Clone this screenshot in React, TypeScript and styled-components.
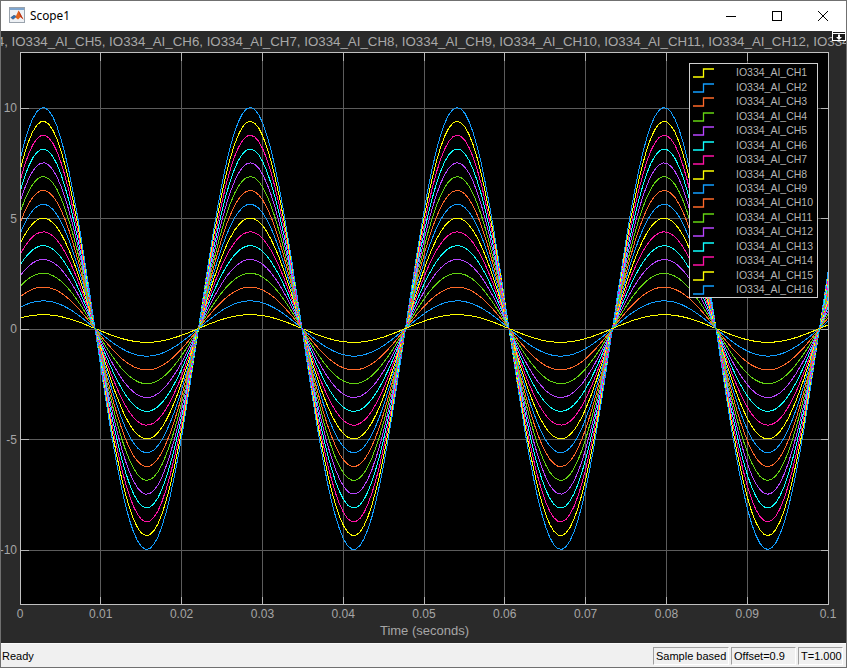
import React from 'react';
import styled, { createGlobalStyle } from 'styled-components';

const COLORS = ['#ffff00', '#129eff', '#ff6929', '#64d412', '#b845ff', '#0fffff', '#ff12a6'];

const channels = Array.from({ length: 16 }, (_, i) => ({
  name: `IO334_AI_CH${i + 1}`,
  color: COLORS[i % COLORS.length],
  amplitude: ((i + 1) * 10) / 16,
}));

const AXES = { left: 20.5, right: 828.5, top: 52.5, bottom: 604.5 };
const ZERO_Y = 328.5;
const UNIT_Y = 22.1;
const TENTH_X = (AXES.right - AXES.left) / 10;

const xTicks = ['0', '0.01', '0.02', '0.03', '0.04', '0.05', '0.06', '0.07', '0.08', '0.09', '0.1'];
const yTicks = [10, 5, 0, -5, -10];

const wavePoints = (amplitude: number) => {
  const points: string[] = [];
  for (let x = AXES.left; x <= AXES.right; x += 4.04) {
    const value = amplitude * Math.sin((2 * Math.PI * (95 - x)) / 207);
    points.push(`${x.toFixed(1)},${(ZERO_Y - value * UNIT_Y).toFixed(1)}`);
  }
  return points.join(' ');
};

const GlobalStyle = createGlobalStyle`
  html, body {
    margin: 0;
    padding: 0;
    background: #ffffff;
  }
`;

const Window = styled.div`
  box-sizing: border-box;
  display: flex;
  flex-direction: column;
  width: 847px;
  height: 668px;
  border: 1px solid #707070;
  overflow: hidden;
  font-family: 'Liberation Sans', Arial, sans-serif;
`;

const TitleBar = styled.div`
  display: flex;
  align-items: center;
  flex: 0 0 30px;
  background: #ffffff;
`;

const AppIcon = styled.svg`
  flex: none;
  width: 16px;
  height: 16px;
  margin: 0 0 2px 8px;
`;

const WindowTitle = styled.span`
  flex: 1;
  margin: 0 0 2px 5px;
  font-family: 'Noto Sans', sans-serif;
  font-size: 11.8px;
  color: #000000;
`;

const WindowButton = styled.div`
  display: flex;
  align-items: center;
  justify-content: center;
  width: 46px;
  height: 30px;
`;

const Figure = styled.div`
  position: relative;
  display: flex;
  flex-direction: column;
  flex: 1;
  background: #2a2a2a;
`;

const PlotTitle = styled.div`
  display: flex;
  justify-content: center;
  flex: 0 0 21px;
  line-height: 22px;
  overflow: hidden;
  white-space: nowrap;
  font-size: 13.3px;
  color: #a8a8a8;
`;

const UndockIcon = styled.svg`
  position: absolute;
  top: 0;
  right: 0;
  width: 14px;
  height: 11px;
`;

const Chart = styled.svg`
  display: block;
  flex: none;
  width: 845px;
  height: 591px;
`;

const TickLabel = styled.text`
  font-family: 'Liberation Sans', Arial, sans-serif;
  font-size: 12px;
  fill: #a6a6a6;
`;

const AxisLabel = styled.text`
  font-family: 'Liberation Sans', Arial, sans-serif;
  font-size: 13px;
  fill: #a6a6a6;
`;

const Legend = styled.div`
  position: absolute;
  top: 32px;
  right: 28px;
  box-sizing: border-box;
  width: 129px;
  height: 235px;
  padding: 1px 0 0 3px;
  background: #000000;
  border: 1px solid #d0d0d0;
`;

const LegendRow = styled.div`
  display: flex;
  align-items: center;
  height: 14.47px;
  font-size: 10.5px;
  color: #b4b4b4;
`;

const LegendSwatch = styled.svg`
  flex: none;
  width: 21px;
  height: 10px;
  margin: 2px 22px 0 0;
`;

const StatusBar = styled.div`
  box-sizing: border-box;
  display: flex;
  align-items: center;
  flex: 0 0 24px;
  padding: 2px 3px 1px 1px;
  gap: 2px;
  background: #f0f0f0;
  border-top: 1px solid #fafafa;
  font-size: 11px;
  color: #000000;
`;

const StatusText = styled.span`
  flex: 1;
`;

const StatusPanel = styled.div<{ $width: number }>`
  box-sizing: border-box;
  width: ${p => p.$width}px;
  height: 18px;
  line-height: 17px;
  padding-left: 2px;
  white-space: nowrap;
  border: 1px solid;
  border-color: #a0a0a0 #ffffff #ffffff #a0a0a0;
`;

const App: React.FC = () => (
  <Window>
    <GlobalStyle />
    <TitleBar>
      <AppIcon viewBox="0 0 16 16">
        <rect x="0.5" y="0.5" width="15" height="15" fill="#eef1f5" stroke="#9aa3ad" />
        <rect x="1" y="1" width="14" height="2" fill="#7fa6cf" />
        <path d="M1.5 10.5 L5 8 L7 9 L9.5 3.5 L11 6 L14.5 12.5 L11.5 10 L9 12.5 L6.5 10.5 L4 12.5 Z" fill="#e0641e" />
        <path d="M1.5 10.5 L5 8 L7 9 L6.5 10.5 L4 12.5 Z" fill="#2f6fb0" />
        <path d="M9.5 3.5 L11 6 L14.5 12.5 L11.5 10 Z" fill="#b5301a" />
      </AppIcon>
      <WindowTitle>Scope1</WindowTitle>
      <WindowButton>
        <svg width="10" height="10" viewBox="0 0 10 10">
          <path d="M0 5.5 H10" stroke="#000" />
        </svg>
      </WindowButton>
      <WindowButton>
        <svg width="10" height="10" viewBox="0 0 10 10">
          <rect x="0.5" y="0.5" width="9" height="9" fill="none" stroke="#000" />
        </svg>
      </WindowButton>
      <WindowButton>
        <svg width="10" height="10" viewBox="0 0 10 10">
          <path d="M0 0 L10 10 M10 0 L0 10" stroke="#000" />
        </svg>
      </WindowButton>
    </TitleBar>
    <Figure>
      <PlotTitle>{channels.map(c => c.name).join(', ')}</PlotTitle>
      <UndockIcon viewBox="0 0 14 11">
        <rect x="0.5" y="0.5" width="13" height="9" fill="#1a1a1a" stroke="#ffffff" />
        <path d="M0 2.5 H14" stroke="#ffffff" />
        <path d="M6 3.5 H8 V6 H10 L7 9 L4 6 H6 Z" fill="#ffffff" />
      </UndockIcon>
      <Chart viewBox="1 52 845 591">
        <rect x={AXES.left} y={AXES.top} width={AXES.right - AXES.left} height={AXES.bottom - AXES.top} fill="#000000" />
        <g shapeRendering="crispEdges" stroke="#5c5c5c">
          {xTicks.slice(1, -1).map((_, i) => {
            const x = Math.round(AXES.left + TENTH_X * (i + 1)) - 0.5;
            return <line key={x} x1={x} x2={x} y1={AXES.top} y2={AXES.bottom} />;
          })}
          {yTicks.map(t => {
            const y = Math.round(ZERO_Y - t * UNIT_Y) + 0.5;
            return <line key={t} x1={AXES.left} x2={AXES.right} y1={y} y2={y} />;
          })}
        </g>
        <g shapeRendering="crispEdges" stroke="#b4b4b4">
          {xTicks.slice(1, -1).map((_, i) => {
            const x = Math.round(AXES.left + TENTH_X * (i + 1)) - 0.5;
            return (
              <g key={x}>
                <line x1={x} x2={x} y1={AXES.top} y2={AXES.top + 8} />
                <line x1={x} x2={x} y1={AXES.bottom - 8} y2={AXES.bottom} />
              </g>
            );
          })}
          {yTicks.map(t => {
            const y = Math.round(ZERO_Y - t * UNIT_Y) + 0.5;
            return (
              <g key={t}>
                <line x1={AXES.left} x2={AXES.left + 8} y1={y} y2={y} />
                <line x1={AXES.right - 8} x2={AXES.right} y1={y} y2={y} />
              </g>
            );
          })}
        </g>
        <g fill="none" strokeWidth="1" shapeRendering="crispEdges">
          {channels.map(c => (
            <polyline key={c.name} points={wavePoints(c.amplitude)} stroke={c.color} />
          ))}
          {/* second pass in reverse order, dashed: gives the speckle where the traces bunch up */}
          {[...channels].reverse().map(c => (
            <polyline key={c.name} points={wavePoints(c.amplitude)} stroke={c.color} strokeDasharray="2 3" />
          ))}
          <polyline points={wavePoints(10)} stroke={COLORS[1]} strokeDasharray="3 2" />
        </g>
        <rect
          x={AXES.left}
          y={AXES.top}
          width={AXES.right - AXES.left}
          height={AXES.bottom - AXES.top}
          fill="none"
          stroke="#c0c0c0"
          shapeRendering="crispEdges"
        />
        {yTicks.map(t => (
          <TickLabel key={t} x="17" y={ZERO_Y - t * UNIT_Y + 4.5} textAnchor="end">
            {t}
          </TickLabel>
        ))}
        {xTicks.map((label, i) => (
          <TickLabel key={label} x={AXES.left + TENTH_X * i - 0.5} y="618" textAnchor="middle">
            {label}
          </TickLabel>
        ))}
        <AxisLabel x="424.5" y="635" textAnchor="middle">
          Time (seconds)
        </AxisLabel>
      </Chart>
      <Legend>
        {channels.map(c => (
          <LegendRow key={c.name}>
            <LegendSwatch viewBox="0 0 21 10">
              <path d="M0 9 H10.5 V1 H21" fill="none" stroke={c.color} strokeWidth="1.3" />
            </LegendSwatch>
            {c.name}
          </LegendRow>
        ))}
      </Legend>
    </Figure>
    <StatusBar>
      <StatusText>Ready</StatusText>
      <StatusPanel $width={76}>Sample based</StatusPanel>
      <StatusPanel $width={65}>Offset=0.9</StatusPanel>
      <StatusPanel $width={45}>T=1.000</StatusPanel>
    </StatusBar>
  </Window>
);

export default App;
